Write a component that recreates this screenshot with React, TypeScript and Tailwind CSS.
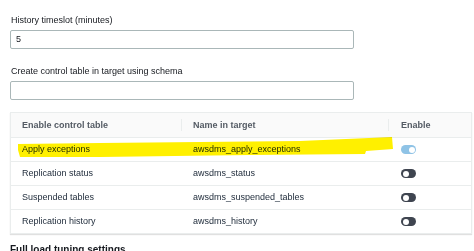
import React from "react";

const rows = [
  { label: "Apply exceptions", name: "awsdms_apply_exceptions", on: true },
  { label: "Replication status", name: "awsdms_status", on: false },
  { label: "Suspended tables", name: "awsdms_suspended_tables", on: false },
  { label: "Replication history", name: "awsdms_history", on: false },
];

function Toggle({ on }: { on: boolean }) {
  return (
    <span
      className={
        on
          ? "flex h-[9px] w-[15px] items-center justify-end rounded-full bg-[#8fc3e6] px-[1.5px]"
          : "flex h-[9px] w-[15px] items-center justify-start rounded-full bg-[#3f4550] px-[1.5px]"
      }
    >
      <span className="h-[6px] w-[6px] rounded-full bg-white" />
    </span>
  );
}

export default function App() {
  return (
    <div
      className="relative h-[251px] w-[474px] overflow-hidden bg-white text-[9px] text-[#16191f]"
      style={{ fontFamily: '"Liberation Sans", Arial, sans-serif' }}
    >
      <div className="flex flex-col pl-[10px] pt-[14px]">
        <label className="pl-px leading-[12px]">History timeslot (minutes)</label>
        <div className="mt-[4px] flex h-[19px] w-[344px] items-center rounded-[2px] border border-[#aab7b8] px-[5px]">
          5
        </div>

        <label className="mt-[16px] pl-px leading-[12px]">
          Create control table in target using schema
        </label>
        <div className="mt-[4px] h-[19px] w-[344px] rounded-[2px] border border-[#aab7b8]" />

        <div className="mt-[12px] w-[462px] border border-[#eaeded] shadow-[0_1px_1px_rgba(0,0,0,0.12)]">
          <div className="flex h-[24px] items-center bg-[#fafafa] font-bold text-[#545b64]">
            <div className="w-[171px] border-r border-[#eaeded] pl-[11px] leading-[12px]">
              Enable control table
            </div>
            <div className="w-[207px] border-r border-[#eaeded] pl-[11px] leading-[12px]">
              Name in target
            </div>
            <div className="pl-[12px] leading-[12px]">Enable</div>
          </div>
          {rows.map((r) => (
            <div
              key={r.label}
              className="flex h-[24px] items-center border-t border-[#eaeded] text-[#232f3e]"
            >
              <div className="w-[171px] pl-[11px]">{r.label}</div>
              <div className="w-[207px] pl-[11px]">{r.name}</div>
              <div className="pl-[12px]">
                <Toggle on={r.on} />
              </div>
            </div>
          ))}
        </div>

        <div className="mt-[10px] text-[10px] font-bold leading-[12px]">
          Full load tuning settings
        </div>
      </div>

      <svg
        className="pointer-events-none absolute left-0 top-0 mix-blend-multiply"
        width="474"
        height="251"
      >
        <polygon
          fill="#fff000"
          points="18,144 100,143 200,142 300,141 392,137 393,149 366,151 365,154 250,155 100,157 20,157 18,150"
        />
      </svg>
    </div>
  );
}
